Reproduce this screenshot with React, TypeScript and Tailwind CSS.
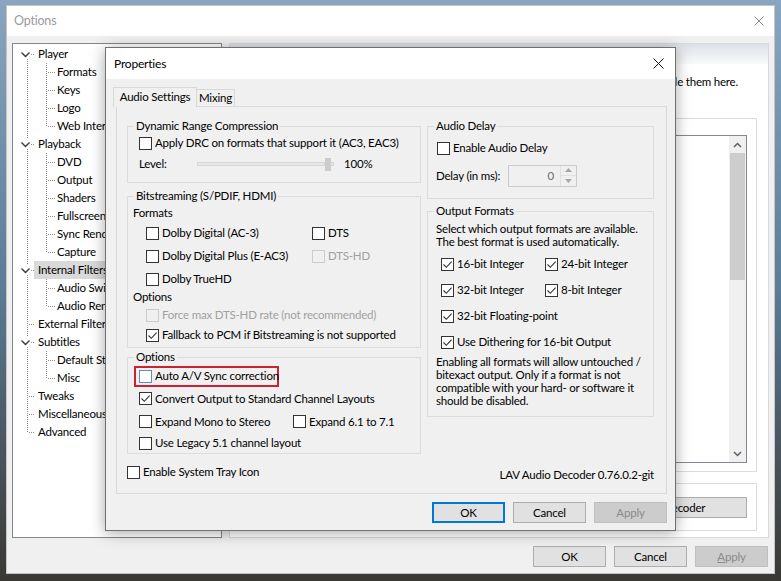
import React from 'react';

const DOT = '#8e8e8e';

type Node = { label: string; children?: string[] };

const tree: Node[] = [
  { label: 'Player', children: ['Formats', 'Keys', 'Logo', 'Web Interface'] },
  { label: 'Playback', children: ['DVD', 'Output', 'Shaders', 'Fullscreen', 'Sync Renderer', 'Capture'] },
  { label: 'Internal Filters', children: ['Audio Switcher', 'Audio Renderer'] },
  { label: 'External Filters' },
  { label: 'Subtitles', children: ['Default Style', 'Misc'] },
  { label: 'Tweaks' },
  { label: 'Miscellaneous' },
  { label: 'Advanced' },
];

function Gutter0({ first, last, chevron, through }: { first?: boolean; last?: boolean; chevron?: boolean; through?: boolean }) {
  // tree guide for the top level; vertical line sits at x 14.5
  if (through) {
    return (
      <svg width="21" height="18" className="shrink-0" shapeRendering="crispEdges">
        <line x1="14.5" y1="0" x2="14.5" y2="18" stroke={DOT} strokeDasharray="1 1" />
      </svg>
    );
  }
  return (
    <svg width="21" height="18" className="shrink-0" shapeRendering="crispEdges">
      {chevron ? (
        <>
          {!first && <line x1="14.5" y1="0" x2="14.5" y2="4" stroke={DOT} strokeDasharray="1 1" />}
          {!last && <line x1="14.5" y1="14" x2="14.5" y2="18" stroke={DOT} strokeDasharray="1 1" />}
          <line x1="18" y1="9.5" x2="21" y2="9.5" stroke={DOT} strokeDasharray="1 1" />
          <path d="M8.5 7.5L12.5 11.5L16.5 7.5" fill="none" stroke="#3c3c3c" strokeWidth="1.4" shapeRendering="auto" />
        </>
      ) : (
        <>
          <line x1="14.5" y1={first ? 9 : 0} x2="14.5" y2={last ? 10 : 18} stroke={DOT} strokeDasharray="1 1" />
          <line x1="16" y1="9.5" x2="21" y2="9.5" stroke={DOT} strokeDasharray="1 1" />
        </>
      )}
    </svg>
  );
}

function Gutter1({ last }: { last?: boolean }) {
  return (
    <svg width="22" height="18" className="shrink-0" shapeRendering="crispEdges">
      <line x1="12.5" y1="0" x2="12.5" y2={last ? 10 : 18} stroke={DOT} strokeDasharray="1 1" />
      <line x1="14" y1="9.5" x2="22" y2="9.5" stroke={DOT} strokeDasharray="1 1" />
    </svg>
  );
}

function Tree() {
  return (
    <div className="w-[210px] shrink-0 overflow-hidden border border-[#828790] bg-white pt-[1px]">
      {tree.map((n, i) => (
        <div key={n.label}>
          <div className="flex h-[18px] items-center whitespace-nowrap">
            <Gutter0 first={i === 0} last={i === tree.length - 1} chevron={!!n.children} />
            <span className={`flex h-[18px] items-center pl-[4px] pr-[60px] ${n.label === 'Internal Filters' ? 'bg-[#d9d9d9]' : ''}`}>
              {n.label}
            </span>
          </div>
          {n.children?.map((c, j) => (
            <div key={c} className="flex h-[18px] items-center whitespace-nowrap">
              <Gutter0 through />
              <Gutter1 last={j === n.children!.length - 1} />
              <span className="pl-[1px]">{c}</span>
            </div>
          ))}
        </div>
      ))}
    </div>
  );
}

function Box({ checked = false, disabled = false, focus = false }) {
  const look = disabled
    ? 'border-[#cccccc] bg-[#f0f0f0]'
    : focus
      ? 'border-[#5a8fc4] bg-white'
      : 'border-[#333333] bg-white';
  return (
    <span className={`flex h-[13px] w-[13px] shrink-0 items-center justify-center border ${look}`}>
      {checked && (
        <svg width="11" height="11" viewBox="0 0 11 11">
          <path d="M1.5 5.5L4.3 8.3L9.6 2.6" fill="none" stroke="#333" strokeWidth="1.1" />
        </svg>
      )}
    </span>
  );
}

function Cb({ label, checked, disabled, focus, className = '' }: { label: string; checked?: boolean; disabled?: boolean; focus?: boolean; className?: string }) {
  return (
    <div className={`flex items-center gap-[3px] whitespace-nowrap ${disabled ? 'text-[#a0a0a0]' : ''} ${className}`}>
      <Box checked={checked} disabled={disabled} focus={focus} />
      <span>{label}</span>
    </div>
  );
}

function Group({ title, className = '', children }: { title: string; className?: string; children: React.ReactNode }) {
  return (
    <fieldset className={`border border-[#dcdcdc] ${className}`}>
      <legend className="ml-[6px] px-[2px] leading-[14px]">{title}</legend>
      {children}
    </fieldset>
  );
}

function Btn({ children, kind = 'normal', className = '' }: { children: React.ReactNode; kind?: 'normal' | 'default' | 'disabled'; className?: string }) {
  const look =
    kind === 'default'
      ? 'border-2 border-[#0078d7] bg-[#e1e1e1]'
      : kind === 'disabled'
        ? 'border border-[#bfbfbf] bg-[#cccccc] text-[#8a8a8a]'
        : 'border border-[#adadad] bg-[#e1e1e1]';
  return <div className={`flex h-[21px] w-[73px] shrink-0 items-center justify-center ${look} ${className}`}>{children}</div>;
}

function Chevron({ up }: { up?: boolean }) {
  return (
    <svg width="9" height="6" viewBox="0 0 9 6">
      <path d={up ? 'M1 5L4.5 1.5L8 5' : 'M1 1L4.5 4.5L8 1'} fill="none" stroke="#606060" strokeWidth="1.5" />
    </svg>
  );
}

function OptionsWindow() {
  return (
    <div className="absolute left-[6px] top-[5px] flex h-[569px] w-[769px] flex-col border border-[#c4c4c4] bg-[#f0f0f0]">
      <div className="flex h-[30px] shrink-0 items-center justify-between bg-white pl-[7px] pr-[10px] text-[#9a9a9a]">
        <span className="text-[12.5px]">Options</span>
        <svg width="10" height="10" viewBox="0 0 10 10">
          <path d="M0.5 0.5L9.5 9.5M9.5 0.5L0.5 9.5" stroke="#8a8a8a" strokeWidth="1" />
        </svg>
      </div>
      <div className="flex flex-1 flex-col pl-[5px] pr-[5px] pt-[7px]">
        <div className="flex h-[495px] gap-[7px]">
          <Tree />
          <div className="flex w-[540px] flex-col border border-[#d9d9d9] bg-white">
            <div className="h-[20px] bg-linear-to-b from-[#dde1e6] to-[#f9fafb]" />
            <div className="mt-[11px] h-[14px] whitespace-nowrap pr-[30px] text-right leading-[14px]">
              Select which internal filters are used and enable or disable them here.
            </div>
            <div className="ml-[10px] mr-[11px] mt-[29px] flex h-[354px] flex-col border border-[#dcdcdc]">
              <div className="ml-[10px] mr-[9px] mt-[16px] flex h-[328px] justify-end border border-[#828790] bg-white">
                <div className="flex w-[17px] flex-col bg-[#f0f0f0]">
                  <div className="flex h-[17px] items-center justify-center">
                    <Chevron up />
                  </div>
                  <div className="mx-[1px] h-[127px] bg-[#cdcdcd]" />
                  <div className="flex-1" />
                  <div className="flex h-[17px] items-center justify-center">
                    <Chevron />
                  </div>
                </div>
              </div>
            </div>
            <div className="ml-[10px] mr-[11px] mt-[11px] flex h-[48px] items-start justify-end border border-[#dcdcdc] pr-[9px] pt-[13px]">
              <div className="flex h-[21px] w-[186px] items-center justify-center border border-[#adadad] bg-[#e1e1e1] pl-[10px]">
                Configure Decoder
              </div>
            </div>
          </div>
        </div>
        <div className="mt-[8px] flex justify-end gap-[8px] pr-[1px]">
          <Btn>OK</Btn>
          <Btn>Cancel</Btn>
          <Btn kind="disabled">
            <span>
              <span className="underline">A</span>pply
            </span>
          </Btn>
        </div>
      </div>
    </div>
  );
}

function PropertiesDialog() {
  return (
    <div className="absolute left-[105px] top-[47px] flex h-[484px] w-[571px] flex-col border border-[#707070] bg-[#f0f0f0] shadow-[0_2px_14px_rgba(0,0,0,0.35)]">
      <div className="flex h-[31px] shrink-0 items-center justify-between bg-white pl-[8px] pr-[11px]">
        <span className="text-[12px]">Properties</span>
        <svg width="11" height="11" viewBox="0 0 11 11">
          <path d="M0.5 0.5L10.5 10.5M10.5 0.5L0.5 10.5" stroke="#111" strokeWidth="1" />
        </svg>
      </div>
      <div className="flex flex-1 flex-col pl-[10px] pr-[8px] pt-[8px]">
        <div className="ml-[-3px] flex h-[19px] shrink-0 items-end">
          <div className="relative z-10 -mb-px flex h-[20px] w-[84px] items-center justify-center border-x border-t border-[#d9d9d9] bg-[#f0f0f0] pb-[2px]">
            Audio Settings
          </div>
          <div className="flex h-[17px] w-[38px] items-center justify-center border-r border-t border-[#d9d9d9] bg-[#f0f0f0]">
            Mixing
          </div>
        </div>
        <div className="flex h-[388px] shrink-0 gap-[6px] overflow-hidden border border-[#d9d9d9] pl-[10px] pt-[12px]">
          {/* left column */}
          <div className="flex w-[294px] flex-col">
            <Group title="Dynamic Range Compression" className="pb-[7px]">
              <Cb className="h-[20px] pl-[11px]" label="Apply DRC on formats that support it (AC3, EAC3)" />
              <div className="flex h-[22px] items-center pl-[11px]">
                <span className="w-[58px]">Level:</span>
                <div className="flex w-[137px] items-center">
                  <div className="h-[4px] flex-1 border border-[#d6d6d6] bg-[#e7e7e7]" />
                  <div className="h-[13px] w-[6px] bg-[#cccccc]" />
                  <div className="h-[4px] w-[3px] border-y border-r border-[#d6d6d6] bg-[#e7e7e7]" />
                </div>
                <span className="ml-[10px]">100%</span>
              </div>
            </Group>
            <Group title="Bitstreaming (S/PDIF, HDMI)" className="mt-[6px] pb-[3px] pt-[1px]">
              <div className="flex h-[18px] items-center pl-[5px]">Formats</div>
              <div className="flex h-[22px] items-center pl-[18px]">
                <Cb className="w-[166px]" label="Dolby Digital (AC-3)" />
                <Cb label="DTS" />
              </div>
              <div className="flex h-[24px] items-center pl-[18px]">
                <Cb className="w-[166px]" label="Dolby Digital Plus (E-AC3)" />
                <Cb label="DTS-HD" disabled />
              </div>
              <div className="flex h-[22px] items-center pl-[18px]">
                <Cb label="Dolby TrueHD" />
              </div>
              <div className="flex h-[14px] items-center pl-[5px]">Options</div>
              <Cb className="h-[22px] pl-[18px]" label="Force max DTS-HD rate (not recommended)" disabled />
              <Cb className="h-[18px] pl-[18px]" label="Fallback to PCM if Bitstreaming is not supported" checked />
            </Group>
            <Group title="Options" className="mt-[2px] pt-[1px]">
              <div className="flex h-[22px] items-center pl-[11px]">
                <Cb className="ml-[-5px] h-[21px] w-[145px] border-2 border-[#cc2233] pl-[3px]" label="Auto A/V Sync correction" focus />
              </div>
              <Cb className="h-[23px] pl-[11px]" label="Convert Output to Standard Channel Layouts" checked />
              <div className="flex h-[23px] items-center pl-[11px]">
                <Cb className="w-[154px]" label="Expand Mono to Stereo" />
                <Cb label="Expand 6.1 to 7.1" />
              </div>
              <Cb className="h-[20px] pl-[11px]" label="Use Legacy 5.1 channel layout" />
            </Group>
            <Cb className="mt-[8px] h-[20px]" label="Enable System Tray Icon" />
          </div>
          {/* right column */}
          <div className="flex w-[227px] flex-col">
            <Group title="Audio Delay" className="pb-[11px] pt-[5px]">
              <Cb className="h-[20px] pl-[9px]" label="Enable Audio Delay" />
              <div className="mt-[6px] flex h-[23px] items-center pl-[8px]">
                <span className="w-[72px] whitespace-nowrap">Delay (in ms):</span>
                <div className="flex h-[22px] w-[69px] border border-[#cccccc] bg-[#f0f0f0]">
                  <div className="flex flex-1 items-center justify-end pr-[6px] text-[#6d6d6d]">0</div>
                  <div className="flex w-[16px] flex-col border-l border-[#e0e0e0]">
                    <div className="flex flex-1 items-center justify-center">
                      <svg width="7" height="4" viewBox="0 0 7 4">
                        <path d="M0 4L3.5 0L7 4Z" fill="#a6a6a6" />
                      </svg>
                    </div>
                    <div className="h-px bg-[#e0e0e0]" />
                    <div className="flex flex-1 items-center justify-center">
                      <svg width="7" height="4" viewBox="0 0 7 4">
                        <path d="M0 0L3.5 4L7 0Z" fill="#a6a6a6" />
                      </svg>
                    </div>
                  </div>
                </div>
              </div>
            </Group>
            <Group title="Output Formats" className="mt-[5px] pb-[9px] pt-[4px]">
              <p className="whitespace-nowrap pl-[8px] leading-[13px]">
                Select which output formats are available.
                <br />
                The best format is used automatically.
              </p>
              <div className="mt-[3px] flex h-[26px] items-center pl-[13px]">
                <Cb className="w-[104px]" label="16-bit Integer" checked />
                <Cb label="24-bit Integer" checked />
              </div>
              <div className="flex h-[26px] items-center pl-[13px]">
                <Cb className="w-[104px]" label="32-bit Integer" checked />
                <Cb label="8-bit Integer" checked />
              </div>
              <Cb className="h-[26px] pl-[13px]" label="32-bit Floating-point" checked />
              <Cb className="h-[26px] pl-[13px]" label="Use Dithering for 16-bit Output" checked />
              <p className="whitespace-nowrap pl-[8px] leading-[13px]">
                Enabling all formats will allow untouched /
                <br />
                bitexact output. Only if a format is not
                <br />
                compatible with your hard- or software it
                <br />
                should be disabled.
              </p>
            </Group>
            <div className="mt-[49px] h-[18px] whitespace-nowrap text-right leading-[18px]">LAV Audio Decoder 0.76.0.2-git</div>
          </div>
        </div>
        <div className="mt-[8px] flex justify-end gap-[8px]">
          <Btn kind="default">OK</Btn>
          <Btn>Cancel</Btn>
          <Btn kind="disabled">Apply</Btn>
        </div>
      </div>
    </div>
  );
}

export default function App() {
  return (
    <div className="relative h-[581px] w-[781px] overflow-hidden bg-linear-to-b from-[#8aa5c0] via-[#5b7b96] to-[#3a3833] font-['Lato',sans-serif] text-[11.5px] leading-[16px] tracking-[-0.2px] text-black">
      <OptionsWindow />
      <PropertiesDialog />
    </div>
  );
}
